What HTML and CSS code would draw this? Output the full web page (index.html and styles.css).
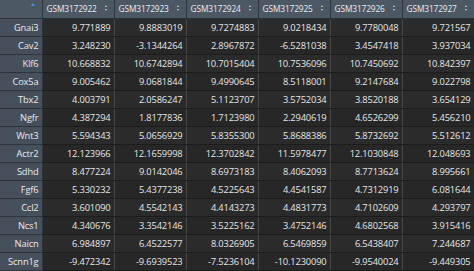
FILE: index.html
```html
<!DOCTYPE html>
<html>
<head>
<meta charset="utf-8">
<link rel="stylesheet" href="styles.css">
</head>
<body>
<table class="grid">
<thead>
<tr>
<th class="corner"><span class="corner-icon"></span></th>
<th><span class="hd">GSM3172922</span><span class="sort"></span></th>
<th><span class="hd">GSM3172923</span><span class="sort"></span></th>
<th><span class="hd">GSM3172924</span><span class="sort"></span></th>
<th><span class="hd">GSM3172925</span><span class="sort"></span></th>
<th><span class="hd">GSM3172926</span><span class="sort"></span></th>
<th><span class="hd">GSM3172927</span><span class="sort"></span></th>
</tr>
</thead>
<tbody>
<tr><th>Gnai3</th><td>9.771889</td><td>9.8883019</td><td>9.7274883</td><td>9.0218434</td><td>9.7780048</td><td>9.721567</td></tr>
<tr><th>Cav2</th><td>3.248230</td><td>-3.1344264</td><td>2.8967872</td><td>-6.5281038</td><td>3.4547418</td><td>3.937034</td></tr>
<tr><th>Klf6</th><td>10.668832</td><td>10.6742894</td><td>10.7015404</td><td>10.7536096</td><td>10.7450692</td><td>10.842397</td></tr>
<tr><th>Cox5a</th><td>9.005462</td><td>9.0681844</td><td>9.4990645</td><td>8.5118001</td><td>9.2147684</td><td>9.022798</td></tr>
<tr><th>Tbx2</th><td>4.003791</td><td>2.0586247</td><td>5.1123707</td><td>3.5752034</td><td>3.8520188</td><td>3.654129</td></tr>
<tr><th>Ngfr</th><td>4.387294</td><td>1.8177836</td><td>1.7123980</td><td>2.2940619</td><td>4.6526299</td><td>5.456210</td></tr>
<tr><th>Wnt3</th><td>5.594343</td><td>5.0656929</td><td>5.8355300</td><td>5.8688386</td><td>5.8732692</td><td>5.512612</td></tr>
<tr><th>Actr2</th><td>12.123966</td><td>12.1659998</td><td>12.3702842</td><td>11.5978477</td><td>12.1030848</td><td>12.048693</td></tr>
<tr><th>Sdhd</th><td>8.477224</td><td>9.0142046</td><td>8.6973183</td><td>8.4062093</td><td>8.7713624</td><td>8.995661</td></tr>
<tr><th>Fgf6</th><td>5.330232</td><td>5.4377238</td><td>4.5225643</td><td>4.4541587</td><td>4.7312919</td><td>6.081644</td></tr>
<tr><th>Ccl2</th><td>3.601090</td><td>4.5542143</td><td>4.4143273</td><td>4.4831773</td><td>4.7102609</td><td>4.293797</td></tr>
<tr><th>Ncs1</th><td>4.340676</td><td>3.3542146</td><td>3.5225162</td><td>3.4752146</td><td>4.6802568</td><td>3.915416</td></tr>
<tr><th>Naicn</th><td>6.984897</td><td>6.4522577</td><td>8.0326905</td><td>6.5469859</td><td>6.5438407</td><td>7.244687</td></tr>
<tr><th>Scnn1g</th><td>-9.472342</td><td>-9.6939523</td><td>-7.5236104</td><td>-10.1230090</td><td>-9.9540024</td><td>-9.449305</td></tr>
</tbody>
</table>
</body>
</html>
```
FILE: styles.css
```css
html, body {
  margin: 0;
  padding: 0;
  background: #2a2a2a;
  overflow: hidden;
}
.grid {
  border-collapse: collapse;
  table-layout: fixed;
  width: 474px;
  font-family: "Open Sans", "Noto Sans", sans-serif;
  font-size: 9.3px;
  letter-spacing: -0.15px;
  color: #e6e6e6;
}
.grid th, .grid td {
  height: 18px;
  padding: 0 4px 0 3px;
  white-space: nowrap;
  overflow: hidden;
  box-sizing: border-box;
}
.grid thead th {
  background: #4d5865;
  color: #e8ecf0;
  font-weight: normal;
  font-size: 8.3px;
  letter-spacing: -0.1px;
  text-align: left;
  border-right: 1px solid #2e353d;
  border-bottom: 1px solid #2b3138;
  position: relative;
  padding-left: 4px;
}
.grid thead th:first-child { width: 42px; }
.grid thead th:not(:first-child) { width: 72px; }
.grid tbody th {
  background: #46505c;
  color: #e6eaee;
  font-weight: normal;
  text-align: right;
  border-bottom: 1px solid #2e353d;
  border-right: 1px solid #2e353d;
  padding-right: 3px;
}
.grid tbody td {
  background: #2b2b2b;
  text-align: right;
  border-bottom: 1px solid #1d1d1d;
  border-right: 1px solid #454545;
  padding-right: 3px;
}
.grid tbody tr:nth-child(even) td {
  background: #272727;
}
.sort {
  position: absolute;
  right: 6px;
  top: 5px;
  width: 3px;
  height: 6px;
}
.sort::before, .sort::after {
  content: "";
  position: absolute;
  left: 0;
  border-left: 1.5px solid transparent;
  border-right: 1.5px solid transparent;
}
.sort::before {
  top: 0;
  border-bottom: 2px solid #c8cdd3;
}
.sort::after {
  bottom: 0;
  border-top: 2px solid #c8cdd3;
}
.corner-icon {
  position: absolute;
  left: 31px;
  top: 3px;
  width: 0;
  height: 0;
  border-left: 2.5px solid transparent;
  border-right: 2.5px solid transparent;
  border-bottom: 3px solid #4a90d9;
}
```
